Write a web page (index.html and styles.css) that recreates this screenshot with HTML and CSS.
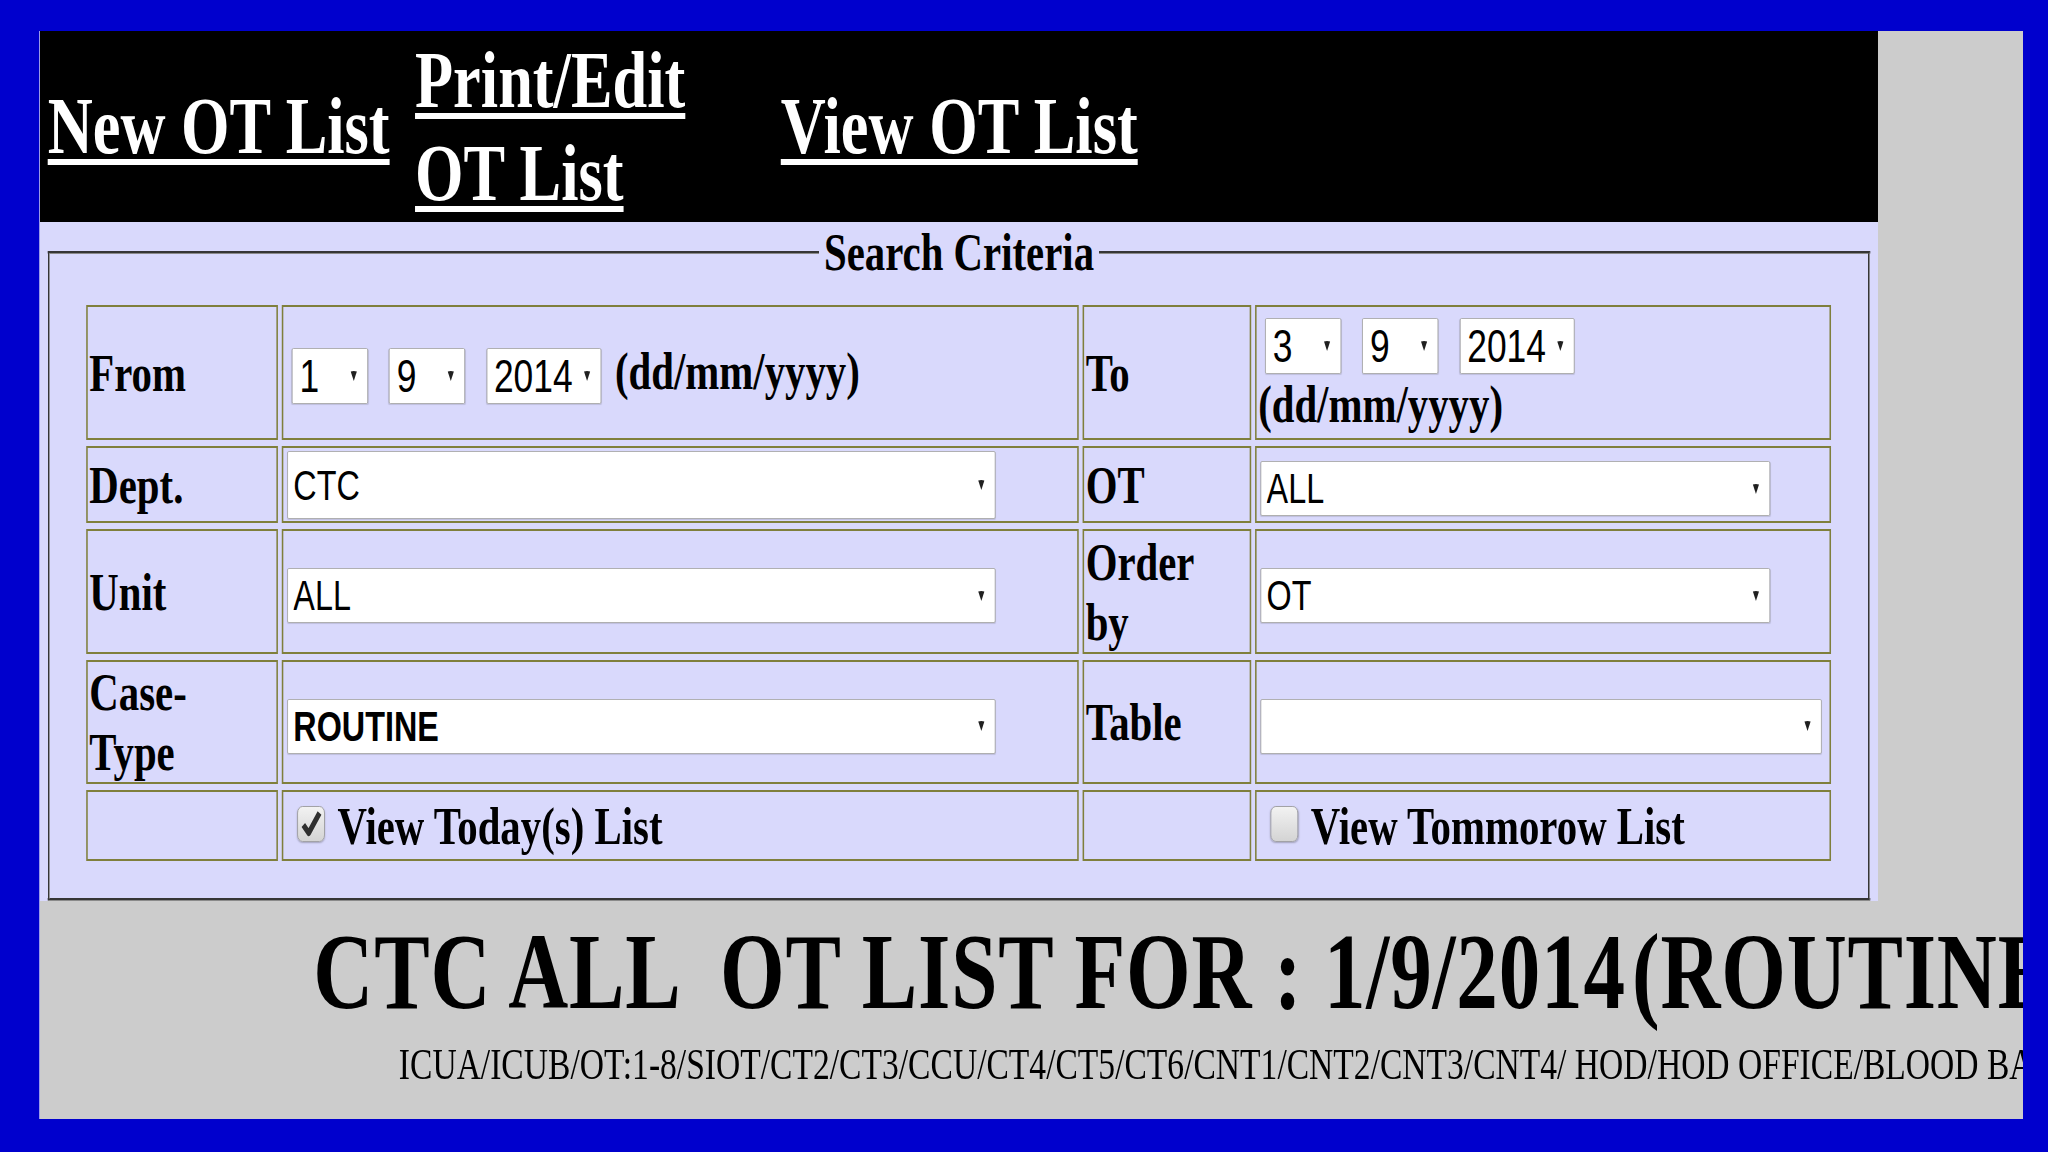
FILE: index.html
```html
<!DOCTYPE html>
<html lang="en">
<head>
<meta charset="utf-8">
<title>OT List</title>
<link rel="stylesheet" href="styles.css">
</head>
<body>
<div class="viewport">
  <div class="page">
    <div class="top">
      <nav class="nav">
        <a class="nav-link nav-new" href="#">New OT List</a>
        <a class="nav-link nav-print" href="#">Print/Edit OT List</a>
        <a class="nav-link nav-view" href="#">View OT List</a>
      </nav>
      <div class="form-area">
        <form>
          <fieldset class="criteria-box">
            <legend class="criteria-legend">Search Criteria</legend>
            <table class="criteria">
              <colgroup>
                <col class="c1"><col class="c2"><col class="c3"><col class="c4">
              </colgroup>
              <tr class="r1">
                <td>From</td>
                <td><select class="sel sel-date"><option>1</option></select> <select class="sel sel-date"><option>9</option></select> <select class="sel sel-date sel-year"><option>2014</option></select> (dd/mm/yyyy)</td>
                <td>To</td>
                <td><select class="sel sel-date"><option>3</option></select> <select class="sel sel-date"><option>9</option></select> <select class="sel sel-date sel-year"><option>2014</option></select> (dd/mm/yyyy)</td>
              </tr>
              <tr class="r2">
                <td>Dept.</td>
                <td><select class="sel sel-wide sel-dept"><option>CTC</option></select></td>
                <td>OT</td>
                <td><select class="sel sel-wide sel-mid"><option>ALL</option></select></td>
              </tr>
              <tr class="r3">
                <td>Unit</td>
                <td><select class="sel sel-wide"><option>ALL</option></select></td>
                <td>Order<br>by</td>
                <td><select class="sel sel-wide sel-mid"><option>OT</option></select></td>
              </tr>
              <tr class="r4">
                <td>Case-<br>Type</td>
                <td><select class="sel sel-wide sel-strong"><option>ROUTINE</option></select></td>
                <td>Table</td>
                <td><select class="sel sel-wide sel-table"><option></option></select></td>
              </tr>
              <tr class="r5">
                <td></td>
                <td><input type="checkbox" class="check" checked> View Today(s) List</td>
                <td></td>
                <td><input type="checkbox" class="check"> View Tommorow List</td>
              </tr>
            </table>
          </fieldset>
        </form>
      </div>
    </div>
    <div class="report">
      <h1 class="report-title">CTC ALL &nbsp;OT LIST FOR : 1/9/2014<span class="paren">(ROUTINE)</span></h1>
      <p class="report-units">ICUA/ICUB/OT:1-8/SIOT/CT2/CT3/CCU/CT4/CT5/CT6/CNT1/CNT2/CNT3/CNT4/ HOD/HOD OFFICE/BLOOD BANK</p>
    </div>
  </div>
</div>
</body>
</html>
```
FILE: styles.css
```css
html, body {
  margin: 0;
  height: 100%;
}

body {
  background: #0000cd;
  padding: 31px 25px 33px 40px;
  box-sizing: border-box;
  overflow: hidden;
}

.viewport {
  width: 1983px;
  height: 1088px;
  background: #cccccc;
  overflow: hidden;
  box-shadow: -1px 0 0 #9a9ae8;
}

/* the captured page is horizontally compressed */
.page {
  width: 2575px;
  transform: scaleX(0.77);
  transform-origin: 0 0;
  font-family: "Liberation Serif", "Times New Roman", serif;
  color: #000;
}

.top {
  width: 2387px;
}

/* header links */
.nav {
  background: #000;
  height: 191px;
  display: flex;
  align-items: center;
}

.nav-link {
  color: #fff;
  font-weight: bold;
  font-size: 81px;
  text-decoration: underline;
  text-decoration-thickness: 6px;
  text-underline-offset: 6px;
}

.nav-new {
  margin-left: 10px;
}

.nav-print {
  margin-left: 33px;
  width: 352px;
}

.nav-view {
  margin-left: 123px;
}

/* search form */
.form-area {
  background: #d9d9fc;
  padding: 0 10px;
}

form {
  margin: 0;
}

.criteria-box {
  margin: 0;
  border: 3px groove #8a8a8a;
  padding: 16px 42px 31px;
}

.criteria-legend {
  margin: 0 auto;
  padding: 0 6px;
  font-weight: bold;
  font-size: 53px;
  line-height: 61px;
}

.criteria {
  border-spacing: 5px 6px;
  width: 2276px;
  table-layout: fixed;
}

.c1 { width: 249px; }
.c2 { width: 1035px; }
.c3 { width: 219px; }
.c4 { width: 748px; }

.criteria td {
  border: 2px solid #7f7f3c;
  padding: 0 2px;
  font-weight: bold;
  font-size: 53px;
  line-height: 60px;
  vertical-align: middle;
  box-sizing: border-box;
}

.r1 { height: 135px; }
.r2 { height: 77px; }
.r3 { height: 125px; }
.r4 { height: 124px; }
.r5 { height: 71px; }

.sel {
  appearance: none;
  -webkit-appearance: none;
  font-family: "Liberation Sans", Arial, sans-serif;
  color: #000;
  background: #fff url("data:image/svg+xml;utf8,<svg xmlns='http://www.w3.org/2000/svg' width='9' height='10' viewBox='0 0 9 10'><path d='M0.5 0.5 Q4.5 -0.5 8.5 0.5 L4.5 10 Z' fill='%23202020'/></svg>") no-repeat right 13px center;
  border: 1px solid #a8a8a8;
  border-radius: 2px;
  box-shadow: 0 1px 1px rgba(0, 0, 0, 0.12);
  box-sizing: border-box;
  vertical-align: middle;
  margin: 0;
}

.sel-date {
  width: 99px;
  height: 56px;
  font-size: 46px;
  padding: 0 0 0 9px;
  margin: 0 5px 0 9px;
}

.sel-year {
  width: 149px;
}

.sel-wide {
  width: 920px;
  height: 55px;
  font-size: 42px;
  padding: 0 0 0 7px;
  margin-left: 3px;
}

.sel-dept {
  height: 68px;
}

.sel-mid {
  width: 662px;
}

.sel-table {
  width: 729px;
}

.sel-strong {
  font-weight: bold;
}

.check {
  appearance: none;
  -webkit-appearance: none;
  width: 36px;
  height: 36px;
  margin: 0 4px 2px 16px;
  vertical-align: baseline;
  border: 1px solid #9a9a9a;
  border-radius: 7px;
  background: linear-gradient(#f2f2f2, #d4d4d4);
  box-shadow: 0 1px 2px rgba(0, 0, 0, 0.25);
  box-sizing: border-box;
}

.check:checked {
  background: url("data:image/svg+xml;utf8,<svg xmlns='http://www.w3.org/2000/svg' width='36' height='36' viewBox='0 0 36 36'><path d='M8 19 L15 27 L29 7' fill='none' stroke='%23303030' stroke-width='6' stroke-linejoin='round'/></svg>") no-repeat center, linear-gradient(#f2f2f2, #d4d4d4);
}

/* report heading */
.report-title {
  margin: 9px 0 0;
  padding-left: 355px;
  font-size: 108px;
  font-weight: bold;
  letter-spacing: 1px;
  line-height: normal;
  white-space: nowrap;
}

.paren {
  margin-left: 8px;
}

.report-units {
  margin: 5px 0 0;
  padding-left: 466px;
  font-size: 43.6px;
  line-height: normal;
  white-space: nowrap;
}
```
